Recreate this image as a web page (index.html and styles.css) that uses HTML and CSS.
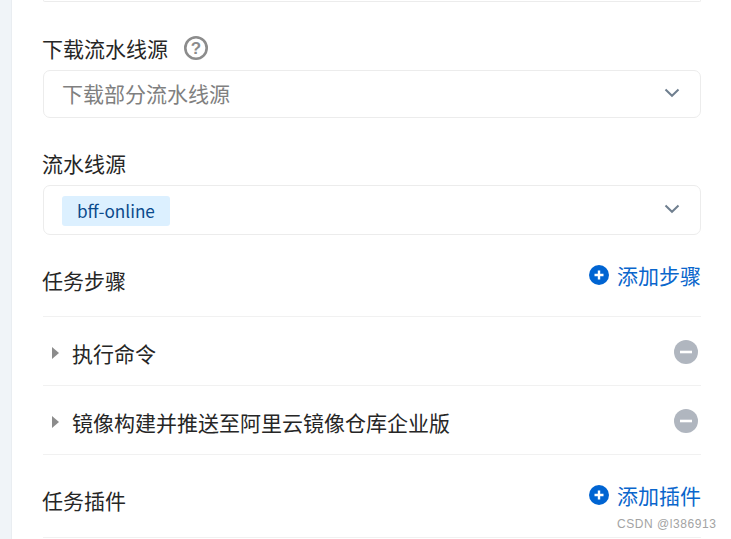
FILE: index.html
```html
<!DOCTYPE html>
<html lang="zh-CN">
<head>
    <meta charset="UTF-8">
    <title>任务配置</title>
    <link rel="stylesheet" href="styles.css">
</head>
<body>
    <div class="page">
        <div class="side"></div>
        <div class="main">
            <div class="box-end"></div>

            <div class="label first">
                下载流水线源
                <svg class="help" width="24" height="24" viewBox="0 0 24 24">
                    <circle cx="12" cy="12" r="10.7" fill="none" stroke="#8c8c8c" stroke-width="2.6"/>
                    <text x="12" y="18" text-anchor="middle" class="help-mark">?</text>
                </svg>
            </div>
            <div class="select placeholder">
                <span class="placeholder-text">下载部分流水线源</span>
                <svg class="arrow" width="16" height="10" viewBox="0 0 16 10"><path d="M1.5 1.5 8 7.8l6.5-6.3" fill="none" stroke="#6f7f8f" stroke-width="2"/></svg>
            </div>

            <div class="label second">流水线源</div>
            <div class="select tall">
                <span class="tag">bff-online</span>
                <svg class="arrow" width="16" height="10" viewBox="0 0 16 10"><path d="M1.5 1.5 8 7.8l6.5-6.3" fill="none" stroke="#6f7f8f" stroke-width="2"/></svg>
            </div>

            <div class="section steps">
                <span class="section-title">任务步骤</span>
                <a class="add">
                    <svg width="20" height="20" viewBox="0 0 20 20"><circle cx="10" cy="10" r="10" fill="#0064d2"/><path d="M10 5.5v9M5.5 10h9" stroke="#fff" stroke-width="2.4"/></svg>
                    添加步骤
                </a>
            </div>

            <div class="row">
                <span class="caret"></span>
                <span class="row-name">执行命令</span>
                <svg class="remove" width="24" height="24" viewBox="0 0 24 24"><circle cx="12" cy="12" r="12" fill="#b0b6bf"/><path d="M6 12h12" stroke="#fff" stroke-width="2.6"/></svg>
            </div>
            <div class="row">
                <span class="caret"></span>
                <span class="row-name">镜像构建并推送至阿里云镜像仓库企业版</span>
                <svg class="remove" width="24" height="24" viewBox="0 0 24 24"><circle cx="12" cy="12" r="12" fill="#b0b6bf"/><path d="M6 12h12" stroke="#fff" stroke-width="2.6"/></svg>
            </div>

            <div class="section plugins">
                <span class="section-title">任务插件</span>
                <a class="add">
                    <svg width="20" height="20" viewBox="0 0 20 20"><circle cx="10" cy="10" r="10" fill="#0064d2"/><path d="M10 5.5v9M5.5 10h9" stroke="#fff" stroke-width="2.4"/></svg>
                    添加插件
                </a>
            </div>
        </div>
    </div>
    <div class="watermark">CSDN @l386913</div>
</body>
</html>
```

FILE: styles.css
```css
html, body {
    margin: 0;
    height: 539px;
    overflow: hidden;
    background: #fff;
}
body {
    font-family: "Noto Sans CJK SC", "Liberation Sans", sans-serif;
    font-size: 21px;
    color: #262626;
}
.page {
    display: flex;
    height: 539px;
}
.side {
    width: 12px;
    background: #f0f4f8;
    border-right: 1px solid #e9edf1;
    box-sizing: border-box;
}
.main {
    width: 658px;
    margin-left: 31px;
}
.box-end {
    height: 1px;
    border: 1px solid #ececec;
    border-top: none;
    border-radius: 0 0 6px 6px;
}
.label {
    display: flex;
    align-items: center;
    height: 30px;
    margin-left: -1px;
    line-height: 30px;
}
.label.first {
    margin-top: 31px;
    margin-bottom: 7px;
}
.label.second {
    margin-top: 30px;
    margin-bottom: 7px;
}
.help {
    margin-left: 16px;
}
.help-mark {
    font-family: "Liberation Sans", sans-serif;
    font-size: 17px;
    font-weight: bold;
    fill: #8c8c8c;
}
.select {
    display: flex;
    align-items: center;
    justify-content: space-between;
    box-sizing: border-box;
    height: 48px;
    padding: 0 20px 0 18px;
    border: 1px solid #ececec;
    border-radius: 7px;
}
.select.tall {
    height: 50px;
}
.placeholder {
    color: #808080;
}
.placeholder-text {
    padding-bottom: 2px;
}
.tag {
    height: 30px;
    margin-top: 2px;
    line-height: 30px;
    padding: 0 15px;
    font-size: 17.2px;
    color: #0b4a8c;
    background: #dcf0ff;
    border-radius: 3px;
}
.arrow {
    margin-bottom: 2px;
}
.section {
    display: flex;
    justify-content: space-between;
    border-bottom: 1px solid #f1f1f1;
}
.steps {
    height: 81px;
}
.plugins {
    height: 82px;
}
.section-title {
    margin-left: -1px;
    padding-top: 30px;
    line-height: 30px;
}
.add {
    display: flex;
    align-items: center;
    gap: 8px;
    height: 30px;
    margin-top: 25px;
    color: #0a66cc;
}
.row {
    display: flex;
    align-items: center;
    height: 68px;
    border-bottom: 1px solid #f1f1f1;
}
.caret {
    width: 0;
    height: 0;
    margin-left: 9px;
    margin-top: 4px;
    border-left: 7px solid #8c8c8c;
    border-top: 6px solid transparent;
    border-bottom: 6px solid transparent;
}
.row-name {
    flex: 1;
    margin-left: 13px;
    padding-top: 4px;
}
.remove {
    margin-right: 3px;
    margin-top: 2px;
}
.watermark {
    position: absolute;
    left: 617px;
    top: 516px;
    font-family: "Liberation Sans", sans-serif;
    font-size: 12px;
    line-height: 16px;
    letter-spacing: 0.55px;
    color: #a3a3a3;
}
```
